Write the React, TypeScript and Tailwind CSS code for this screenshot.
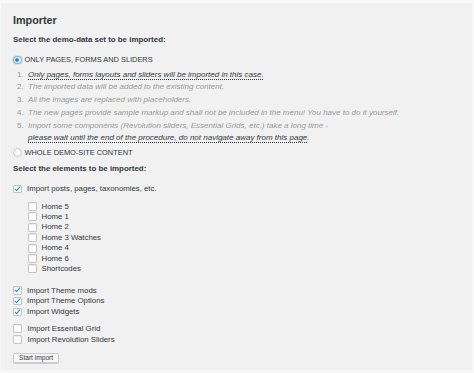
import React from 'react';

const dark = 'text-[#32373c]';
const muted = 'text-[#999999]';

const Check = () => (
  <svg viewBox="0 0 10 10" className="w-[8px] h-[8px]">
    <path d="M1.6 5.2 L4 7.4 L8.6 2" fill="none" stroke="#1e8cbe" strokeWidth="1.7" strokeLinecap="round" strokeLinejoin="round" />
  </svg>
);

const Box: React.FC<{ checked?: boolean; big?: boolean }> = ({ checked, big }) => (
  <span
    className={`${big ? 'w-[9px] h-[9px]' : 'w-[8.5px] h-[8.5px]'} shrink-0 bg-white border border-[#c3c6c9] rounded-[1px] flex items-center justify-center shadow-[inset_0_1px_1px_rgba(0,0,0,0.08)]`}
  >
    {checked && <Check />}
  </span>
);

const Radio: React.FC<{ checked?: boolean }> = ({ checked }) => (
  <span
    className={`w-[8.5px] h-[8.5px] shrink-0 rounded-full bg-white border flex items-center justify-center ${
      checked ? 'border-[#7fb0dc] shadow-[0_0_1.5px_rgba(30,140,190,0.7)]' : 'border-[#c3c6c9]'
    }`}
  >
    {checked && <span className="w-[4px] h-[4px] rounded-full bg-[#1e8cbe]" />}
  </span>
);

const Row: React.FC<{ checked?: boolean; big?: boolean; label: string; indent?: boolean; h?: string }> = ({
  checked,
  big,
  label,
  indent,
  h = 'h-[10.4px]',
}) => (
  <div className={`flex items-center ${h} ${indent ? 'pl-[15px] gap-[4.5px]' : 'gap-[5.5px]'}`}>
    <Box checked={checked} big={big} />
    <span className={`${dark} whitespace-nowrap`}>{label}</span>
  </div>
);

const dotted = 'underline decoration-dotted decoration-[#32373c] underline-offset-[1.5px]';
const label = `${dark} font-bold text-[7.9px] h-[10px] flex items-center`;

export default function App() {
  const homes = ['Home 5', 'Home 1', 'Home 2', 'Home 3 Watches', 'Home 4', 'Home 6', 'Shortcodes'];

  return (
    <div className="w-[474px] h-[373px] bg-[#f8f8f8] pt-[3px] pr-[2px] pb-[3px] pl-[1px] overflow-hidden">
      <div
        className="h-full bg-[#f1f1f1] pl-[12px] pt-[9px] text-[7.8px] leading-none"
        style={{ fontFamily: '"Liberation Sans", Arial, sans-serif' }}
      >
        <h1 className={`${dark} font-bold text-[10.8px] h-[16px] flex items-center`}>Importer</h1>

        <div className={`${label} mt-[7px]`}>Select the demo-data set to be imported:</div>

        <div className="flex items-center gap-[3px] h-[12px] mt-[9px]">
          <Radio checked />
          <span className={`${dark} text-[7.4px]`}>ONLY PAGES, FORMS AND SLIDERS</span>
        </div>

        <ol className="mt-[2.5px] italic text-[8px] leading-[12.8px] pl-[4px]">
          <li className="flex">
            <span className={`${muted} w-[11px] not-italic`}>1.</span>
            <span className={`${dark} ${dotted}`}>Only pages, forms layouts and sliders will be imported in this case.</span>
          </li>
          <li className="flex">
            <span className={`${muted} w-[11px] not-italic`}>2.</span>
            <span className={muted}>The imported data will be added to the existing content.</span>
          </li>
          <li className="flex">
            <span className={`${muted} w-[11px] not-italic`}>3.</span>
            <span className={muted}>All the images are replaced with placeholders.</span>
          </li>
          <li className="flex">
            <span className={`${muted} w-[11px] not-italic`}>4.</span>
            <span className={`${muted} whitespace-nowrap`}>
              The new pages provide sample markup and shall not be included in the menu! You have to do it yourself.
            </span>
          </li>
          <li className="flex">
            <span className={`${muted} w-[11px] not-italic`}>5.</span>
            <span className={muted}>
              Import some components (Revolution sliders, Essential Grids, etc.) take a long time -
              <br />
              <span className={`${dark} ${dotted}`}>please wait until the end of the procedure, do not navigate away from this page</span>
              <span className={dark}>.</span>
            </span>
          </li>
        </ol>

        <div className="flex items-center gap-[3px] h-[12px] mt-[1px]">
          <Radio />
          <span className={`${dark} text-[7.4px]`}>WHOLE DEMO-SITE CONTENT</span>
        </div>

        <div className={`${label} mt-[6px]`}>Select the elements to be imported:</div>

        <div className="mt-[9px]">
          <Row checked label="Import posts, pages, taxonomies, etc." h="h-[11px]" />
        </div>

        <div className="mt-[7px] flex flex-col">
          {homes.map((h) => (
            <Row key={h} label={h} indent big />
          ))}
        </div>

        <div className="mt-[11px] flex flex-col">
          <Row checked label="Import Theme mods" h="h-[10.8px]" />
          <Row checked label="Import Theme Options" h="h-[10.8px]" />
          <Row checked label="Import Widgets" h="h-[10.8px]" />
        </div>

        <div className="mt-[6px] flex flex-col">
          <Row big label="Import Essential Grid" h="h-[11px]" />
          <Row big label="Import Revolution Sliders" h="h-[11px]" />
        </div>

        <button
          className={`${dark} mt-[8px] h-[10px] px-[5px] text-[6.6px] leading-none bg-[#f7f7f7] border border-[#cccccc] rounded-[2px] shadow-[0_1px_0_#ccc]`}
        >
          Start import
        </button>
      </div>
    </div>
  );
}
